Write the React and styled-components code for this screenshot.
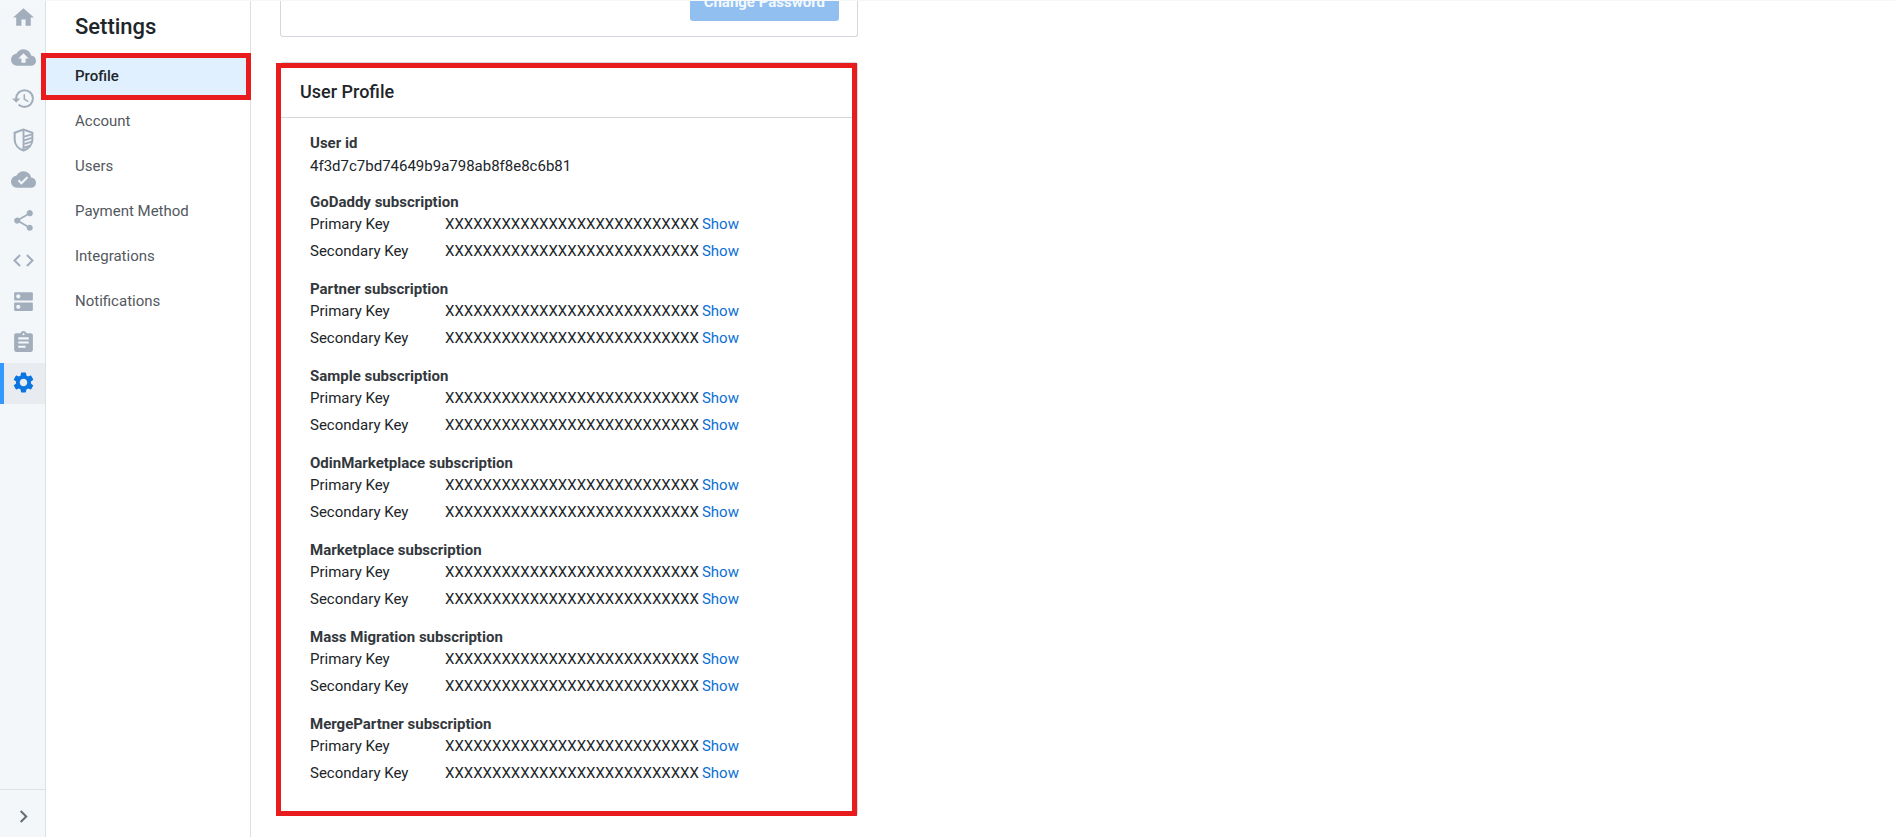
import React from 'react';
import styled, { createGlobalStyle } from 'styled-components';
import {
  MdAssignment,
  MdBackup,
  MdChevronRight,
  MdCloudDone,
  MdCode,
  MdDns,
  MdHistory,
  MdHome,
  MdSettings,
  MdShare,
} from 'react-icons/md';

const GlobalStyle = createGlobalStyle`
  * {
    box-sizing: border-box;
  }

  body {
    margin: 0;
    background: #fff;
    color: #202529;
    font: 15px/22px Roboto, 'Liberation Sans', sans-serif;
  }

  button {
    font-family: inherit;
  }
`;

const Page = styled.div`
  display: flex;
  height: 100vh;
  overflow: hidden;
  border-top: 1px solid #f6f7f8;
`;

const Rail = styled.nav`
  display: flex;
  flex: 0 0 46px;
  flex-direction: column;
  justify-content: space-between;
  background: #f3f7fa;
  border-right: 1px solid #dee0e3;
`;

const RailIcons = styled.div`
  display: flex;
  flex-direction: column;
  height: 406px;
  margin-top: -3px;
`;

const RailLink = styled.a`
  display: flex;
  flex: 1;
  align-items: center;
  padding: 0 0 2px ${props => (props.$active ? '7px' : '11px')};
  border-left: ${props => (props.$active ? '4px solid #3399ff' : '0')};
  background: ${props => (props.$active ? '#e8ecf1' : 'transparent')};
  color: ${props => (props.$active ? '#0b75e0' : '#a3aebd')};

  & > svg {
    flex: none;
    width: 25px;
    height: 25px;
  }
`;

const ExpandButton = styled.button`
  display: flex;
  align-items: center;
  height: 48px;
  padding: 6px 0 0 11px;
  border: 0;
  border-top: 1px solid #dee0e3;
  background: none;
  color: #666e78;
  font-size: 25px;
`;

const Sidebar = styled.aside`
  flex: 0 0 205px;
  border-right: 1px solid #dedfe1;
`;

const SidebarTitle = styled.h1`
  margin: 0;
  padding: 11px 0 12px 29px;
  font-size: 22px;
  font-weight: 500;
  line-height: 30px;
`;

const SidebarLink = styled.a`
  position: relative;
  display: block;
  padding-left: 29px;
  background: ${props => (props.$active ? '#e0f0ff' : 'transparent')};
  color: ${props => (props.$active ? '#202529' : '#53585e')};
  font-weight: ${props => (props.$active ? 500 : 400)};
  line-height: 45px;
  text-decoration: none;
`;

// red frame drawn over the element that holds it
const Marker = styled.span`
  position: absolute;
  inset: ${props => props.$inset};
  border: 5px solid #e81c1c;
  pointer-events: none;
`;

const Content = styled.main`
  flex: 1;
  padding: 0 29px;
`;

const Card = styled.section`
  position: relative;
  max-width: 578px;
  margin-bottom: 25px;
  border: 1px solid #d2d8dd;
  border-radius: 3px;
`;

const PasswordCard = styled(Card)`
  display: flex;
  justify-content: flex-end;
  padding: 0 18px 15px;
  border-top: 0;
  border-radius: 0 0 3px 3px;
`;

const PasswordButton = styled.button`
  height: 38px;
  margin-top: -18px;
  padding: 0 14px;
  border: 0;
  border-radius: 3px;
  background: #90bff0;
  color: #f4f9fe;
  font-size: 15px;
  font-weight: 700;
`;

const CardTitle = styled.h2`
  margin: 0;
  padding: 4px 19px 0;
  border-bottom: 1px solid #d5d8dc;
  font-size: 18px;
  font-weight: 500;
  line-height: 50px;
`;

const CardBody = styled.div`
  padding: 14px 29px 15px;
`;

const Group = styled.div`
  margin-bottom: 16px;
`;

const GroupTitle = styled.h3`
  margin: 0;
  color: #33383d;
  font-size: 15px;
  font-weight: 700;
  line-height: 22px;
`;

const UserId = styled.p`
  margin: 1px 0 14px;
`;

const KeyRow = styled.div`
  display: flex;
  margin-bottom: 5px;
`;

const KeyLabel = styled.span`
  flex: 0 0 135px;
`;

const ShowButton = styled.button`
  margin-left: 3px;
  padding: 0;
  border: 0;
  background: none;
  color: #0b6fd6;
  font-size: 15px;
  line-height: 22px;
`;

const ShieldIcon = () => (
  <svg viewBox='0 0 24 24' fill='none' stroke='currentColor' strokeWidth='2'>
    <path d='M12 2.5 3.5 5.500v6.500c0 5 3.600 9 8.500 10.500 4.900-1.500 8.500-5.500 8.500-10.500V5.500z' />
    <path d='M12 2.500v20M12 9.500l8-2.500M12 13l8-2.500M12 16.500l8-2.500M12 20l6-2' strokeWidth='1.800' />
  </svg>
);

const railItems = [
  { label: 'Home', Icon: MdHome },
  { label: 'Backup', Icon: MdBackup },
  { label: 'History', Icon: MdHistory },
  { label: 'Security', Icon: ShieldIcon },
  { label: 'Cloud status', Icon: MdCloudDone },
  { label: 'Share', Icon: MdShare },
  { label: 'Code', Icon: MdCode },
  { label: 'Servers', Icon: MdDns },
  { label: 'Reports', Icon: MdAssignment },
  { label: 'Settings', Icon: MdSettings, active: true },
];

const sections = ['Profile', 'Account', 'Users', 'Payment Method', 'Integrations', 'Notifications'];

const subscriptions = [
  'GoDaddy',
  'Partner',
  'Sample',
  'OdinMarketplace',
  'Marketplace',
  'Mass Migration',
  'MergePartner',
];

const MASKED_KEY = 'X'.repeat(27);

const Subscription = props => (
  <Group>
    <GroupTitle>{props.name} subscription</GroupTitle>
    {['Primary Key', 'Secondary Key'].map(label => (
      <KeyRow key={label}>
        <KeyLabel>{label}</KeyLabel>
        <span>{MASKED_KEY}</span>
        <ShowButton type='button'>Show</ShowButton>
      </KeyRow>
    ))}
  </Group>
);

const App = () => (
  <Page>
    <GlobalStyle />
    <Rail>
      <RailIcons>
        {railItems.map(({ label, Icon, active }) => (
          <RailLink key={label} href='#' aria-label={label} $active={active}>
            <Icon />
          </RailLink>
        ))}
      </RailIcons>
      <ExpandButton type='button' aria-label='Expand menu'>
        <MdChevronRight />
      </ExpandButton>
    </Rail>
    <Sidebar>
      <SidebarTitle>Settings</SidebarTitle>
      {sections.map((section, i) => (
        <SidebarLink key={section} href='#' $active={i === 0}>
          {section}
          {i === 0 && <Marker $inset='-1px -1px -1px -5px' />}
        </SidebarLink>
      ))}
    </Sidebar>
    <Content>
      <PasswordCard>
        <PasswordButton type='button'>Change Password</PasswordButton>
      </PasswordCard>
      <Card>
        <CardTitle>User Profile</CardTitle>
        <CardBody>
          <GroupTitle>User id</GroupTitle>
          <UserId>4f3d7c7bd74649b9a798ab8f8e8c6b81</UserId>
          {subscriptions.map(name => (
            <Subscription key={name} name={name} />
          ))}
        </CardBody>
        <Marker $inset='0 0 -1px -5px' />
      </Card>
    </Content>
  </Page>
);

export default App;
